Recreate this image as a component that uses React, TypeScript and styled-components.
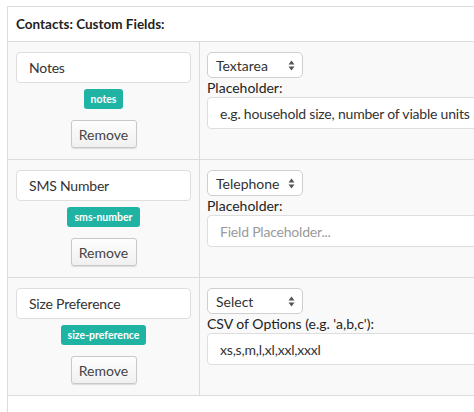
import React from 'react'
import styled, { createGlobalStyle } from 'styled-components'

const GlobalStyle = createGlobalStyle`
  html, body {
    margin: 0;
    padding: 0;
    background: #fff;
    overflow: hidden;
  }
  body {
    font-family: Lato, 'Liberation Sans', sans-serif;
    color: #333;
  }
`

const Panel = styled.div`
  margin: 6px 0 0 7px;
  width: 540px;
  border: 1px solid #dcdcdc;
  border-right: none;
  background: #fff;
`

const PanelHeader = styled.div`
  height: 34px;
  display: flex;
  align-items: center;
  padding-left: 8px;
  border-bottom: 1px solid #dcdcdc;
  font-size: 13.5px;
  font-weight: bold;
  color: #222;
`

const FieldRow = styled.div`
  display: grid;
  grid-template-columns: 192px 1fr;
  background: #f9f9f9;
  border-bottom: 1px solid #dcdcdc;
`

const NameCell = styled.div`
  display: flex;
  flex-direction: column;
  align-items: center;
  padding: 10px 8px 11px;
  border-right: 1px solid #dcdcdc;
`

const TypeCell = styled.div`
  display: flex;
  flex-direction: column;
  align-items: flex-start;
  padding: 10px 0 0 7px;
`

const TextInput = styled.input<{ $wide?: boolean }>`
  box-sizing: border-box;
  width: ${(p) => (p.$wide ? '300px' : '100%')};
  height: ${(p) => (p.$wide ? '32px' : '31px')};
  padding: 0 12px;
  border: 1px solid #dedede;
  border-radius: 4px;
  background: #fff;
  font-family: inherit;
  font-size: 14px;
  letter-spacing: -0.2px;
  color: #333;
  outline: none;

  &::placeholder {
    color: #9a9a9a;
  }
`

const Slug = styled.span`
  margin-top: 6px;
  height: 20px;
  padding: 0 7px;
  display: inline-flex;
  align-items: center;
  border-radius: 3px;
  background: #1fb3a4;
  color: #fff;
  font-size: 10.5px;
  font-weight: bold;
`

const RemoveButton = styled.button`
  margin-top: 11px;
  width: 66px;
  height: 28px;
  padding: 0;
  border: 1px solid #c8c8c8;
  border-radius: 3px;
  background: linear-gradient(#fdfdfd, #f0f0f0);
  box-shadow: 0 1px 1px rgba(0, 0, 0, 0.12);
  font-family: inherit;
  font-size: 14px;
  color: #444;
`

const SelectWrap = styled.div`
  position: relative;
  width: 96px;
  height: 26px;
  flex: none;
`

const TypeSelect = styled.select`
  appearance: none;
  box-sizing: border-box;
  display: block;
  width: 100%;
  height: 100%;
  margin: 0;
  padding: 0 0 0 8px;
  border: 1px solid #cfcfcf;
  border-radius: 5px;
  background: #fff;
  font-family: inherit;
  font-size: 14px;
  color: #333;
`

const Arrows = styled.svg`
  position: absolute;
  right: 8px;
  top: 8px;
  pointer-events: none;
`

const FieldLabel = styled.label`
  display: block;
  height: 19px;
  line-height: 19px;
  font-size: 14px;
  color: #222;
`

const PanelFooter = styled.div`
  height: 20px;
`

interface IField {
  name: string
  slug: string
  type: string
  label: string
  value?: string
  placeholder?: string
}

const fields: IField[] = [
  {
    name: 'Notes',
    slug: 'notes',
    type: 'Textarea',
    label: 'Placeholder:',
    value: 'e.g. household size, number of viable units',
  },
  {
    name: 'SMS Number',
    slug: 'sms-number',
    type: 'Telephone',
    label: 'Placeholder:',
    placeholder: 'Field Placeholder...',
  },
  {
    name: 'Size Preference',
    slug: 'size-preference',
    type: 'Select',
    label: "CSV of Options (e.g. 'a,b,c'):",
    value: 'xs,s,m,l,xl,xxl,xxxl',
  },
]

const CustomField: React.FC<IField> = ({ name, slug, type, label, value, placeholder }) => (
  <FieldRow>
    <NameCell>
      <TextInput defaultValue={name} />
      <Slug>{slug}</Slug>
      <RemoveButton>Remove</RemoveButton>
    </NameCell>
    <TypeCell>
      <SelectWrap>
        <TypeSelect defaultValue={type}>
          <option>{type}</option>
        </TypeSelect>
        <Arrows width="7" height="11" viewBox="0 0 7 11">
          <path d="M3.5 0.5 L6.5 4.5 H0.5 Z" fill="#555" />
          <path d="M3.5 10.5 L6.5 6.5 H0.5 Z" fill="#555" />
        </Arrows>
      </SelectWrap>
      <FieldLabel>{label}</FieldLabel>
      <TextInput $wide defaultValue={value} placeholder={placeholder} />
    </TypeCell>
  </FieldRow>
)

export default function App() {
  return (
    <>
      <GlobalStyle />
      <Panel>
        <PanelHeader>Contacts: Custom Fields:</PanelHeader>
        {fields.map((f) => (
          <CustomField key={f.slug} {...f} />
        ))}
        <PanelFooter />
      </Panel>
    </>
  )
}
